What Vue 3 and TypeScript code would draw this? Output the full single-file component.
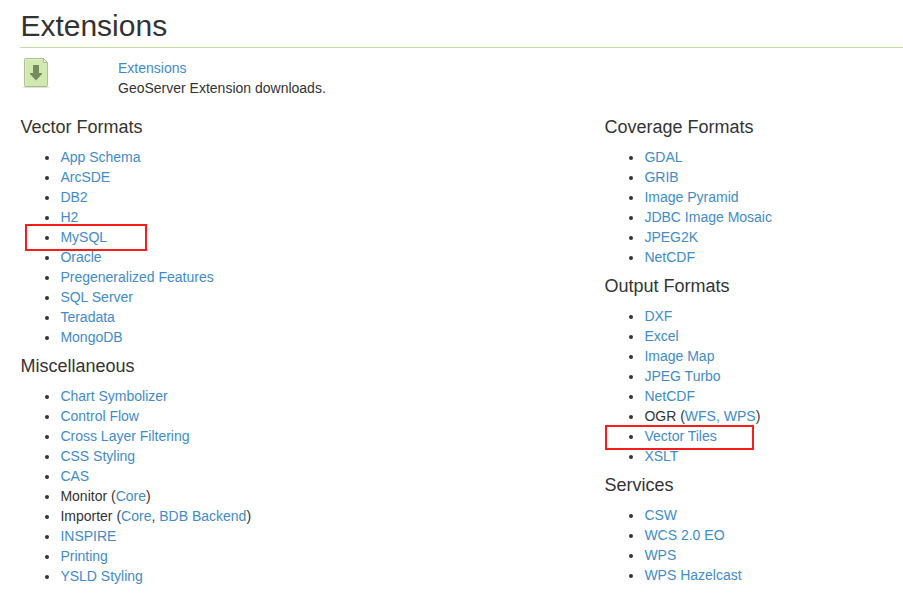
<script setup lang="ts">
interface Item { pre?: string; links: string[]; post?: string; mark?: string }
interface Section { title: string; items: Item[] }
const plain = (...names: string[]): Item[] => names.map((n) => ({ links: [n] }))

const left: Section[] = [
  {
    title: 'Vector Formats',
    items: [
      ...plain('App Schema', 'ArcSDE', 'DB2', 'H2'),
      { links: ['MySQL'], mark: 'mark-mysql' },
      ...plain('Oracle', 'Pregeneralized Features', 'SQL Server', 'Teradata', 'MongoDB'),
    ],
  },
  {
    title: 'Miscellaneous',
    items: [
      ...plain('Chart Symbolizer', 'Control Flow', 'Cross Layer Filtering', 'CSS Styling', 'CAS'),
      { pre: 'Monitor (', links: ['Core'], post: ')' },
      { pre: 'Importer (', links: ['Core', 'BDB Backend'], post: ')' },
      ...plain('INSPIRE', 'Printing', 'YSLD Styling'),
    ],
  },
]
const right: Section[] = [
  { title: 'Coverage Formats', items: plain('GDAL', 'GRIB', 'Image Pyramid', 'JDBC Image Mosaic', 'JPEG2K', 'NetCDF') },
  {
    title: 'Output Formats',
    items: [
      ...plain('DXF', 'Excel', 'Image Map', 'JPEG Turbo', 'NetCDF'),
      { pre: 'OGR (', links: ['WFS,', 'WPS'], post: ')' },
      { links: ['Vector Tiles'], mark: 'mark-tiles' },
      ...plain('XSLT'),
    ],
  },
  { title: 'Services', items: plain('CSW', 'WCS 2.0 EO', 'WPS', 'WPS Hazelcast') },
]
const columns = [left, right]
const separator = (item: Item, i: number): string =>
  i === item.links.length - 1 ? '' : item.links[i].endsWith(',') ? ' ' : ', '
</script>

<template>
  <main class="page">
    <h1>Extensions</h1>
    <div class="intro">
      <svg class="icon" width="28" height="32" viewBox="0 0 28 32">
        <path d="M1 30.500H27" stroke="#dfe1dc" />
        <path d="M3.500 1.500H21.500L25.500 5.500V28.500Q25.500 29.500 24.500 29.500H3.500Q2.500 29.500 2.500 28.500V2.500Q2.500 1.500 3.500 1.500Z" fill="#d1e8b1" stroke="#adc194" />
        <path d="M3.500 28.500V2.500H20.500" fill="none" stroke="#dff0c7" />
        <path d="M3 29.500H25" stroke="#a5b98b" />
        <path d="M21.500 1.500V5.500H25.500Z" fill="#f6f9f0" stroke="#adc194" />
        <path d="M11 8h6v8h3v1l-6 6.500l-6-6.500v-1h3z" fill="#788b5e" />
      </svg>
      <div><a>Extensions</a><p>GeoServer Extension downloads.</p></div>
    </div>
    <div class="columns">
      <div v-for="(column, c) in columns" :key="c">
        <section v-for="section in column" :key="section.title">
          <h4>{{ section.title }}</h4>
          <ul>
            <li v-for="(item, n) in section.items" :key="n">
              <span v-if="item.mark" class="mark" :class="item.mark"></span>{{ item.pre }}<template v-for="(link, i) in item.links" :key="link"><a>{{ link }}</a>{{ separator(item, i) }}</template>{{ item.post }}
            </li>
          </ul>
        </section>
      </div>
    </div>
  </main>
</template>

<style>
body { margin: 0; background: #fff; overflow: hidden; }
</style>
<style scoped>
.page {
  box-sizing: border-box;
  height: 593px;
  padding: 6px 0 0 20px;
  overflow: hidden;
  font: 14px/20px "Liberation Sans", Arial, sans-serif;
  color: #333;
}
h1 { margin: 0; height: 41px; padding-left: 0.4px; border-bottom: 1px solid #c6dba1; font-size: 30px; line-height: 40px; font-weight: 400; }
.intro { display: flex; height: 59px; padding-top: 10px; }
.intro > div { margin-left: 68px; }
.icon { flex: none; margin-left: 2px; margin-top: -1px; }
a { color: #428bca; text-decoration: none; }
p { margin: 0; }
.columns { display: grid; grid-template-columns: 584px 1fr; padding-left: 0.4px; }
h4 { margin: 0; height: 30px; font-size: 18px; line-height: 20px; font-weight: 400; }
ul { margin: 0 0 9px; padding: 0 0 0 40px; }
li { position: relative; height: 20px; white-space: nowrap; }
.mark { position: absolute; box-sizing: border-box; border: 2px solid #f81c1c; }
.mark-mysql { left: -35px; top: -3px; width: 122px; height: 27px; }
.mark-tiles { left: -39px; top: -1px; width: 149px; height: 25px; }
</style>
